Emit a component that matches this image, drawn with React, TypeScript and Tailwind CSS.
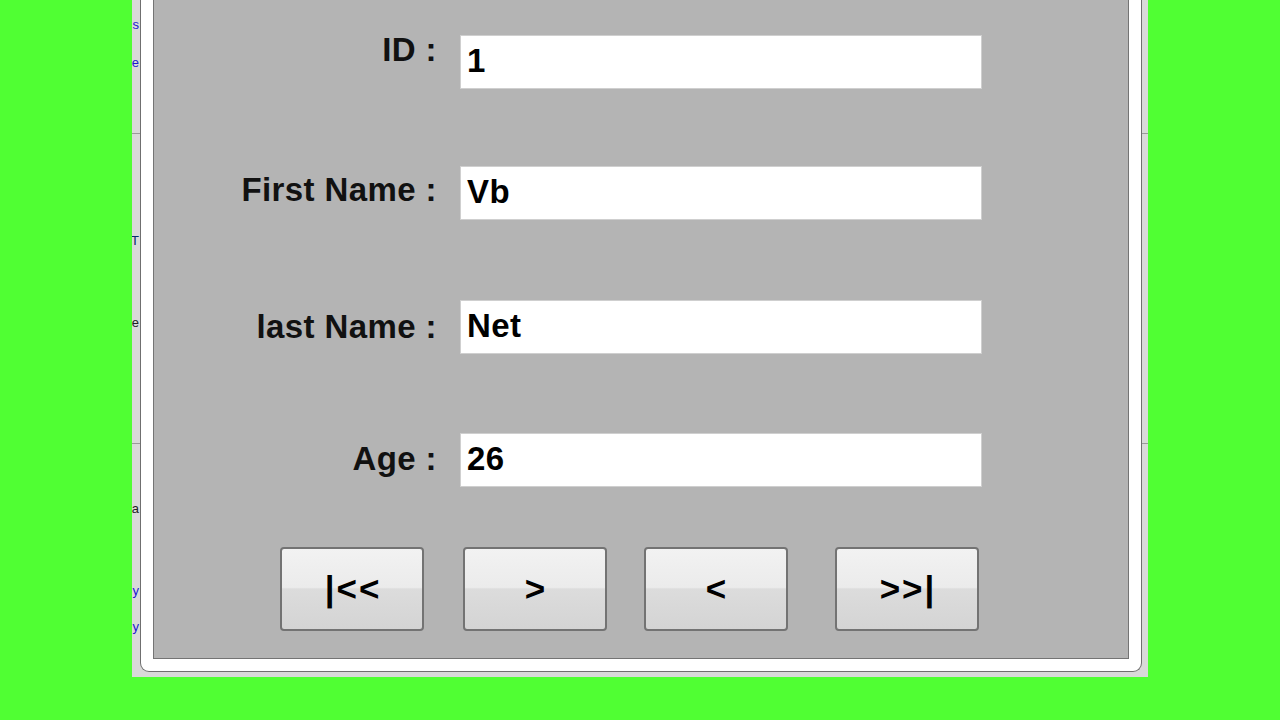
import React from 'react'

const font = { fontFamily: '"Liberation Sans", Arial, sans-serif' }

// fragments of the window behind the dialog, peeking out on the left
const leftBits = [
  { top: 18, text: 's', color: 'text-[#1a1ad0]' },
  { top: 24, text: 'e', color: 'text-[#1a1ad0]' },
  { top: 100, text: 'T', color: 'text-[#0a2a6a]' },
  { top: 68, text: 'e', color: 'text-[#222]' },
  { top: 58, text: 'a', color: 'text-[#222]' },
  { top: 68, text: 'y', color: 'text-[#1a1ad0]' },
  { top: 22, text: 'y', color: 'text-[#1a1ad0]' },
]

function Bit({ text, color, top }: { text: string; color: string; top: number }) {
  return (
    <div className={`flex justify-end text-[13px] leading-[14px] pr-[1px] ${color}`} style={{ marginTop: top }}>
      {text}
    </div>
  )
}

function Field({ label, value, labelTop, rowTop }: { label: string; value: string; labelTop: string; rowTop: string }) {
  return (
    <div className={`flex items-start ${rowTop}`}>
      <div className={`w-[283px] text-right text-[33px] leading-[32px] tracking-[0.4px] font-bold text-[#111] whitespace-nowrap ${labelTop}`}>{label}</div>
      <div className="ml-[23px] w-[522px] h-[54px] bg-white border border-[#cfcfcf] pl-[6px] pt-[9px] text-[33px] leading-[32px] tracking-[0.4px] font-bold text-black">
        {value}
      </div>
    </div>
  )
}

function NavButton({ label, className }: { label: string; className?: string }) {
  return (
    <button
      className={`w-[144px] h-[84px] rounded-[4px] border-2 border-[#737373] bg-[linear-gradient(to_bottom,#f2f2f2_0%,#ebebeb_48%,#dcdcdc_50%,#d4d4d4_100%)] flex items-center justify-center text-[35px] leading-[34px] tracking-[2px] pl-[2px] font-bold text-black ${className ?? ''}`}
    >
      {label}
    </button>
  )
}

export default function App() {
  return (
    <div className="w-full h-[720px] bg-[#50ff33] flex pl-[132px]" style={font}>
      <div className="w-[1016px] h-[677px] bg-[#d9d9d9] flex">
        {/* left strip of the window behind */}
        <div className="w-[8px] flex flex-col overflow-hidden">
          <div className="h-[134px] border-b border-[#9a9a9a] flex flex-col">
            {leftBits.slice(0, 2).map((b, i) => <Bit key={i} {...b} />)}
          </div>
          <div className="h-[310px] border-b border-[#9a9a9a] flex flex-col">
            {leftBits.slice(2, 4).map((b, i) => <Bit key={i} {...b} />)}
          </div>
          <div className="flex-1 flex flex-col">
            {leftBits.slice(4).map((b, i) => <Bit key={i} {...b} />)}
          </div>
        </div>

        {/* dialog */}
        <div className="w-[1002px] h-[672px] bg-white border-x border-b border-[#6f6f6f] rounded-b-[9px] px-[12px] pb-[12px] flex flex-col">
          <div className="flex-1 bg-[#b4b4b4] border-x border-b border-[#747474] flex flex-col">
            <Field label="ID :" value="1" rowTop="mt-[35px]" labelTop="mt-[-1px]" />
            <Field label="First Name :" value="Vb" rowTop="mt-[77px]" labelTop="mt-[8px]" />
            <Field label="last Name :" value="Net" rowTop="mt-[80px]" labelTop="mt-[11px]" />
            <Field label="Age :" value="26" rowTop="mt-[79px]" labelTop="mt-[10px]" />

            <div className="flex mt-[60px] pl-[126px]">
              <NavButton label="|<<" />
              <NavButton label=">" className="ml-[39px]" />
              <NavButton label="<" className="ml-[37px]" />
              <NavButton label=">>|" className="ml-[47px]" />
            </div>
          </div>
        </div>

        {/* right strip of the window behind */}
        <div className="w-[6px] flex flex-col">
          <div className="h-[134px] border-b border-[#9a9a9a]" />
          <div className="h-[310px] border-b border-[#9a9a9a]" />
        </div>
      </div>
    </div>
  )
}
